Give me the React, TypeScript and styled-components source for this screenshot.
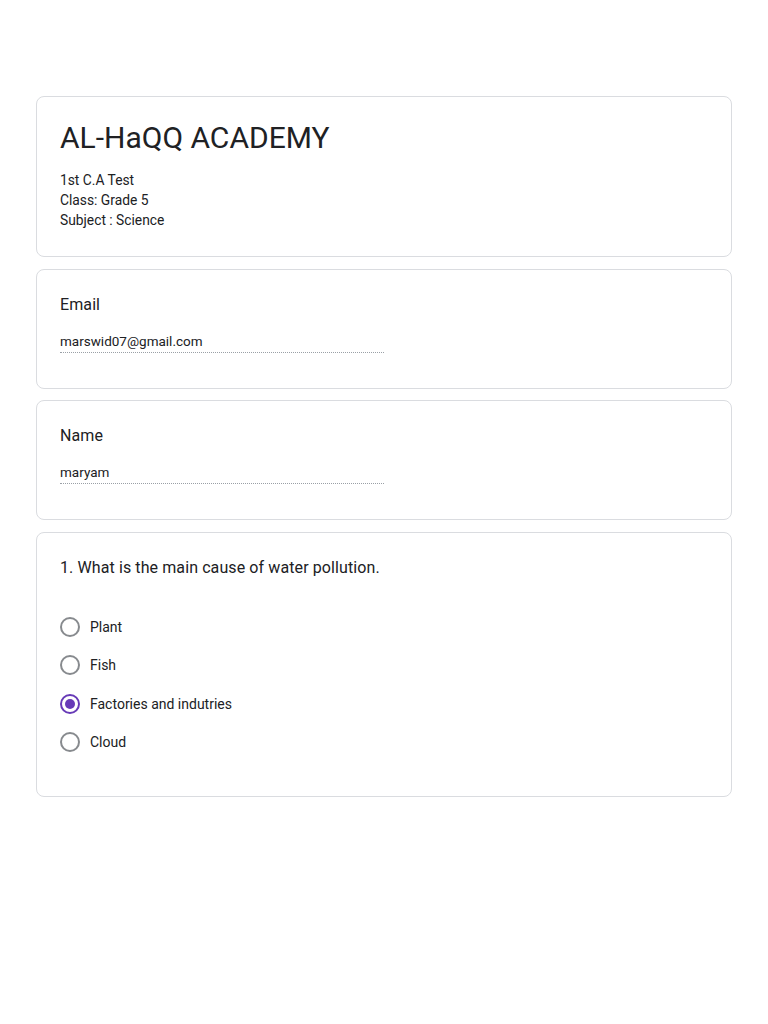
import React from "react";
import styled, { createGlobalStyle } from "styled-components";

const Global = createGlobalStyle`
  html, body { margin: 0; padding: 0; background: #ffffff; }
  body { font-family: Roboto, "Noto Sans", Arial, sans-serif; color: #202124; }
`;

const Page = styled.div`
  padding: 96px 36px 40px 36px;
  display: flex;
  flex-direction: column;
  gap: 11.5px;
`;

const Card = styled.section<{ $pt?: number; $pb?: number }>`
  background: #fff;
  border: 1px solid #dadce0;
  border-radius: 8px;
  padding: ${(p) => p.$pt ?? 23}px 24px ${(p) => p.$pb ?? 35}px 23px;
`;

const Title = styled.h1`
  margin: 0;
  font-size: 30px;
  line-height: 36px;
  font-weight: 400;
  color: #202124;
  letter-spacing: 0;
`;

const Desc = styled.div`
  margin-top: 14px;
  font-size: 13.8px;
  line-height: 20px;
  color: #202124;
`;

const Label = styled.div`
  font-size: 16px;
  line-height: 24px;
  color: #202124;
  letter-spacing: 0.1px;
`;

const Answer = styled.div`
  margin-top: 15px;
  width: 324px;
  font-size: 13.5px;
  line-height: 18px;
  padding-bottom: 2px;
  color: #202124;
  border-bottom: 1px dotted #9aa0a6;
`;

const Options = styled.div`
  margin-top: 37px;
  display: flex;
  flex-direction: column;
  gap: 18.5px;
`;

const Option = styled.div`
  display: flex;
  align-items: center;
  gap: 10px;
  height: 20px;
  font-size: 14px;
  color: #202124;
`;

const Radio = styled.span<{ $checked?: boolean }>`
  box-sizing: border-box;
  width: 20px;
  height: 20px;
  border-radius: 50%;
  border: 2px solid ${(p) => (p.$checked ? "#673ab7" : "#5f6368")};
  opacity: ${(p) => (p.$checked ? 1 : 0.75)};
  display: flex;
  align-items: center;
  justify-content: center;
  &::after {
    content: "";
    width: 10px;
    height: 10px;
    border-radius: 50%;
    background: #673ab7;
    display: ${(p) => (p.$checked ? "block" : "none")};
  }
`;

const options = [
  { text: "Plant", checked: false },
  { text: "Fish", checked: false },
  { text: "Factories and indutries", checked: true },
  { text: "Cloud", checked: false },
];

export default function App() {
  return (
    <>
      <Global />
      <Page>
        <Card $pt={23} $pb={26}>
          <Title>AL-HaQQ ACADEMY</Title>
          <Desc>
            1st C.A Test
            <br />
            Class: Grade 5
            <br />
            Subject : Science
          </Desc>
        </Card>
        <Card>
          <Label>Email</Label>
          <Answer>marswid07@gmail.com</Answer>
        </Card>
        <Card>
          <Label>Name</Label>
          <Answer>maryam</Answer>
        </Card>
        <Card $pt={23} $pb={44}>
          <Label>1. What is the main cause of water pollution.</Label>
          <Options>
            {options.map((o) => (
              <Option key={o.text}>
                <Radio $checked={o.checked} />
                {o.text}
              </Option>
            ))}
          </Options>
        </Card>
      </Page>
    </>
  );
}
